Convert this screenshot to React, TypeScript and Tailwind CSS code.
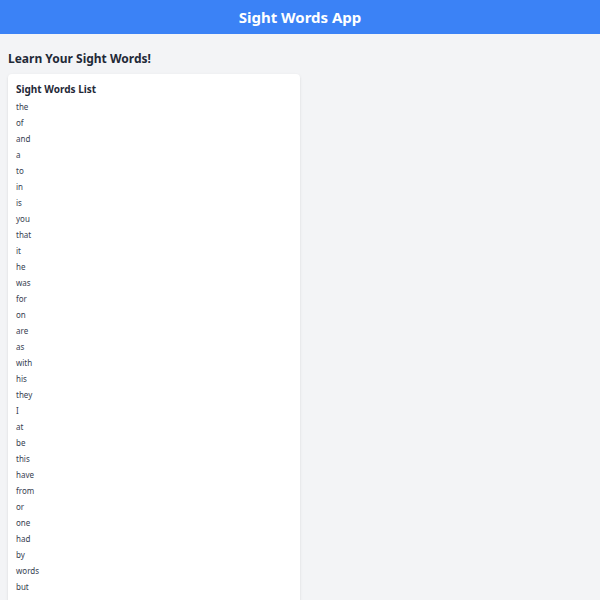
const words = [
  "the", "of", "and", "a", "to", "in", "is", "you", "that", "it", "he", "was", "for", "on", "are", "as",
  "with", "his", "they", "I", "at", "be", "this", "have", "from", "or", "one", "had", "by", "words", "but",
  "not", "what", "all", "were", "we", "when", "your", "can", "said",
];

export default function App() {
  return (
    <div className="min-h-screen bg-[#f3f4f6] font-['Noto_Sans',sans-serif] text-[#1f2937]">
      <header className="h-[34px] bg-[#3b82f6] flex items-center justify-center">
        <h1 className="text-[15px] font-bold text-white">Sight Words App</h1>
      </header>
      <main className="px-2 pt-[17px]">
        <h2 className="text-[12px] font-bold leading-[16px] mb-[7px]">Learn Your Sight Words!</h2>
        <div className="w-[292px] bg-white rounded shadow-sm px-2 pt-2">
          <h3 className="text-[10px] font-bold leading-[14px] mb-[3px]">Sight Words List</h3>
          <ul>
            {words.map((w, i) => (
              <li key={i} className="text-[8px] leading-[16px] text-[#374151]">
                {w}
              </li>
            ))}
          </ul>
        </div>
      </main>
    </div>
  );
}
